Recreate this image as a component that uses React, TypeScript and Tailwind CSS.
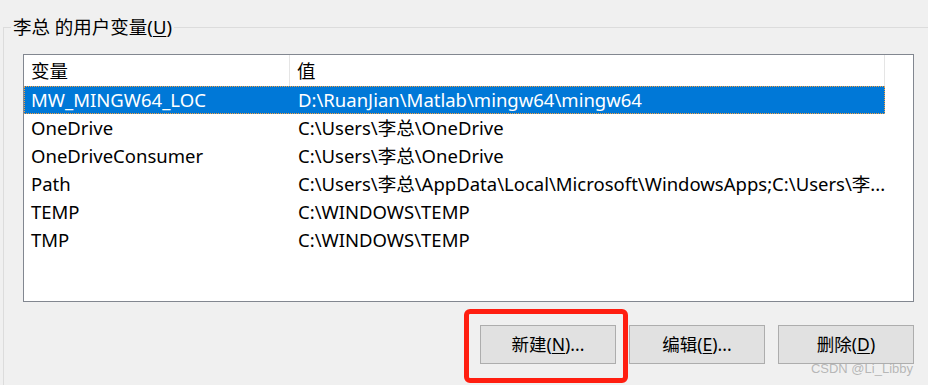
import React from 'react'

const rows = [
  { name: 'MW_MINGW64_LOC', value: 'D:\\RuanJian\\Matlab\\mingw64\\mingw64', selected: true },
  { name: 'OneDrive', value: 'C:\\Users\\李总\\OneDrive' },
  { name: 'OneDriveConsumer', value: 'C:\\Users\\李总\\OneDrive' },
  { name: 'Path', value: 'C:\\Users\\李总\\AppData\\Local\\Microsoft\\WindowsApps;C:\\Users\\李...' },
  { name: 'TEMP', value: 'C:\\WINDOWS\\TEMP' },
  { name: 'TMP', value: 'C:\\WINDOWS\\TEMP' },
]

const font = { fontFamily: '"Noto Sans", "Noto Sans CJK SC", sans-serif' }

const App = () => {
  return (
    <div
      className="relative w-[928px] h-[385px] overflow-hidden bg-[#f0f0f0] text-[18.5px] text-black"
      style={font}
    >
      <div className="ml-[3px] mt-[27px] h-[358px] border-l border-t border-[#dcdcdc]">
        <div className="-mt-[13px] ml-[7px] w-fit bg-[#f0f0f0] px-[2px] leading-[24px]">
          李总 的用户变量(<span className="underline underline-offset-2">U</span>)
        </div>

        <div className="ml-[19px] mt-[15px] w-[891px] h-[248px] border border-[#828790] bg-white">
          <div className="flex h-[31px] items-center">
            <div className="w-[266px] h-full border-r border-[#e5e5e5] pl-[7px] flex items-center">变量</div>
            <div className="w-[595px] h-full border-r border-[#e5e5e5] pl-[7px] flex items-center">值</div>
          </div>
          {rows.map((row) => (
            <div
              key={row.name}
              className={
                row.selected
                  ? 'flex w-[861px] h-[28px] items-center bg-[#0078d7] text-white outline-1 outline-dotted outline-[#f5a040] -outline-offset-1'
                  : 'flex w-[861px] h-[28px] items-center'
              }
            >
              <div className="w-[266px] pl-[7px] whitespace-nowrap">{row.name}</div>
              <div className="w-[595px] pl-[8px] whitespace-nowrap">{row.value}</div>
            </div>
          ))}
        </div>

        <div className="ml-[476px] mt-[23px] flex gap-[13px] text-[17.5px]">
          <button className="w-[136px] h-[39px] border border-[#adadad] bg-[#e1e1e1] leading-none">
            新建(<span className="underline underline-offset-2">N</span>)...
          </button>
          <button className="w-[136px] h-[39px] border border-[#adadad] bg-[#e1e1e1] leading-none">
            编辑(<span className="underline underline-offset-2">E</span>)...
          </button>
          <button className="w-[136px] h-[39px] border border-[#adadad] bg-[#e1e1e1] leading-none">
            删除(<span className="underline underline-offset-2">D</span>)
          </button>
        </div>
      </div>

      {/* red annotation frame */}
      <div className="absolute left-[464px] top-[309px] w-[164px] h-[74px] rounded-[6px] border-[5px] border-[#ff1e10]" />

      <div
        className="absolute right-[15px] top-[359px] text-[13px] text-[#a8a8a8]/80"
        style={{ fontFamily: '"Liberation Sans", Arial, sans-serif' }}
      >
        CSDN @Li_Libby
      </div>
    </div>
  )
}

export default App
